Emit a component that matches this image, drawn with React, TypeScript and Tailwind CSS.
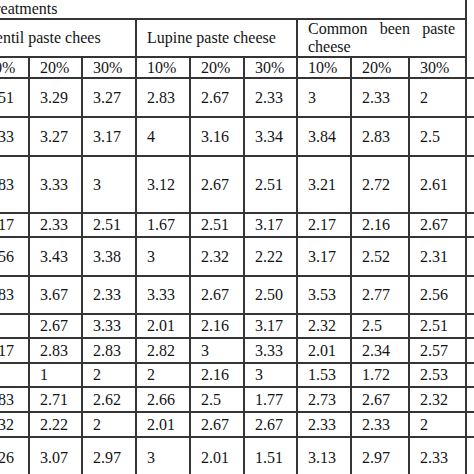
import React from "react";

const rows: string[][] = [
  ["2.51", "3.29", "3.27", "2.83", "2.67", "2.33", "3", "2.33", "2"],
  ["2.33", "3.27", "3.17", "4", "3.16", "3.34", "3.84", "2.83", "2.5"],
  ["2.83", "3.33", "3", "3.12", "2.67", "2.51", "3.21", "2.72", "2.61"],
  ["2.17", "2.33", "2.51", "1.67", "2.51", "3.17", "2.17", "2.16", "2.67"],
  ["2.56", "3.43", "3.38", "3", "2.32", "2.22", "3.17", "2.52", "2.31"],
  ["2.83", "3.67", "2.33", "3.33", "2.67", "2.50", "3.53", "2.77", "2.56"],
  ["3", "2.67", "3.33", "2.01", "2.16", "3.17", "2.32", "2.5", "2.51"],
  ["2.17", "2.83", "2.83", "2.82", "3", "3.33", "2.01", "2.34", "2.57"],
  ["2", "1", "2", "2", "2.16", "3", "1.53", "1.72", "2.53"],
  ["2.83", "2.71", "2.62", "2.66", "2.5", "1.77", "2.73", "2.67", "2.32"],
  ["2.32", "2.22", "2", "2.01", "2.67", "2.67", "2.33", "2.33", "2"],
  ["3.26", "3.07", "2.97", "3", "2.01", "1.51", "3.13", "2.97", "2.33"],
];

const cell =
  "bg-white flex items-center px-[10px] whitespace-nowrap text-[16px] leading-[18px] text-[#141414]";

export default function App() {
  return (
    <div className="w-[474px] h-[474px] overflow-hidden bg-white font-['Liberation_Serif','Times_New_Roman',serif]">
      <div className="ml-[-24px] w-max grid gap-[2px] bg-[#353535] grid-cols-[52px_51px_52px_52px_52px_51px_52px_56px_55px_60px] grid-rows-[18px_36px_19px_37px_37px_55px_22px_37px_36px_22px_23px_22px_23px_23px_40px]">
        <div className={`${cell} col-span-9`}>Treatments</div>
        <div className={`${cell} row-span-3`}></div>

        <div className={`${cell} col-span-3`}>Lentil paste chees</div>
        <div className={`${cell} col-span-3`}>Lupine paste cheese</div>
        <div className="bg-white col-span-3 flex items-center px-[10px] text-[16px] leading-[18px] text-[#141414] text-justify">
          <span className="block w-full text-justify">Common been paste cheese</span>
        </div>

        {["10%", "20%", "30%", "10%", "20%", "30%", "10%", "20%", "30%"].map((p, i) => (
          <div key={`h${i}`} className={cell}>
            {p}
          </div>
        ))}

        {rows.map((r, ri) => (
          <React.Fragment key={ri}>
            {r.map((v, ci) => (
              <div key={ci} className={cell}>
                {v}
              </div>
            ))}
            <div className={cell}></div>
          </React.Fragment>
        ))}
      </div>
    </div>
  );
}
